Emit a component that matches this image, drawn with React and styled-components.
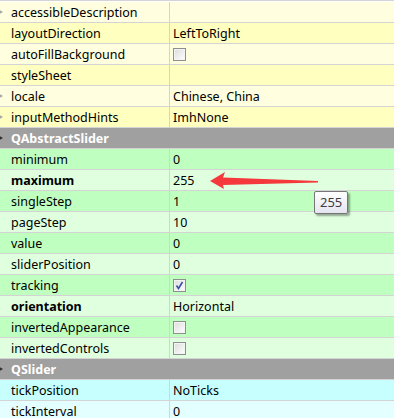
import React from 'react';
import styled, { createGlobalStyle } from 'styled-components';

const GlobalStyle = createGlobalStyle`
  html, body {
    margin: 0;
    padding: 0;
    background: #ffffff;
  }
  body {
    font-family: "Noto Sans", "DejaVu Sans", sans-serif;
    font-size: 12.5px;
    color: #000;
  }
`;

const palette = {
  yellow: ['#ffffdf', '#ffffbf'],
  green: ['#dfffdf', '#bfffbf'],
  cyan: ['#e3ffff', '#c7ffff'],
};

const Editor = styled.div`
  position: relative;
  width: 394px;
  height: 418px;
  overflow: hidden;
  border-top: 1px solid #d4d4d4;
  padding-top: 1px;
  box-sizing: border-box;
`;

const Row = styled.div`
  display: grid;
  grid-template-columns: 170px 1fr;
  height: 20px;
  border-bottom: 1px solid #d4d4d4;
  background: ${(p) => p.$bg};
`;

const NameCell = styled.div`
  display: grid;
  grid-template-columns: 11px 1fr;
  align-items: center;
  border-right: 1px solid #d4d4d4;
  font-weight: ${(p) => (p.$bold ? 700 : 400)};
  white-space: nowrap;
  overflow: hidden;
`;

const ValueCell = styled.div`
  display: flex;
  align-items: center;
  padding-left: 3px;
  white-space: nowrap;
`;

const Expander = styled.span`
  width: 0;
  height: 0;
  margin-left: -2px;
  border-top: 3px solid transparent;
  border-bottom: 3px solid transparent;
  border-left: 5px solid ${(p) => p.$color || '#a8a8a8'};
  visibility: ${(p) => (p.$show ? 'visible' : 'hidden')};
`;

const HeaderRow = styled.div`
  display: grid;
  grid-template-columns: 11px 1fr;
  align-items: center;
  height: 20px;
  border-bottom: 1px solid #d4d4d4;
  background: #a0a0a0;
  color: #ffffff;
  font-weight: 700;
`;

const Check = styled.span`
  display: inline-flex;
  align-items: center;
  justify-content: center;
  width: 11px;
  height: 11px;
  border: 1px solid #8f8f8f;
  background: linear-gradient(135deg, #dcdcdc 0%, #f4f4f4 70%, #ffffff 100%);
  box-shadow: inset 0 0 0 1px #f4f4f4;
`;

const Tooltip = styled.div`
  position: absolute;
  left: 314px;
  top: 190px;
  padding: 1px 5px 2px;
  border: 1px solid #767676;
  border-radius: 2px;
  background: linear-gradient(#ffffff, #e4e5f0);
  color: #3c3c3c;
  font-size: 13px;
  box-shadow: 2px 2px 2px rgba(0, 0, 0, 0.35);
`;

const ArrowLayer = styled.svg`
  position: absolute;
  left: 205px;
  top: 168px;
`;

const Checkbox = ({ checked }) => (
  <Check>
    {checked && (
      <svg width="11" height="11" viewBox="0 0 11 11">
        <path d="M2.5 5.5 L4.5 8.5 L8.5 2" stroke="#3a4fa6" strokeWidth="1.6" fill="none" />
      </svg>
    )}
  </Check>
);

const groups = [
  {
    header: null,
    color: 'yellow',
    rows: [
      { name: 'accessibleDescription', value: '', expand: true },
      { name: 'layoutDirection', value: 'LeftToRight' },
      { name: 'autoFillBackground', check: false },
      { name: 'styleSheet', value: '' },
      { name: 'locale', value: 'Chinese, China', expand: true },
      { name: 'inputMethodHints', value: 'ImhNone', expand: true },
    ],
  },
  {
    header: 'QAbstractSlider',
    color: 'green',
    rows: [
      { name: 'minimum', value: '0' },
      { name: 'maximum', value: '255', bold: true },
      { name: 'singleStep', value: '1' },
      { name: 'pageStep', value: '10' },
      { name: 'value', value: '0' },
      { name: 'sliderPosition', value: '0' },
      { name: 'tracking', check: true },
      { name: 'orientation', value: 'Horizontal', bold: true },
      { name: 'invertedAppearance', check: false },
      { name: 'invertedControls', check: false },
    ],
  },
  {
    header: 'QSlider',
    color: 'cyan',
    rows: [
      { name: 'tickPosition', value: 'NoTicks' },
      { name: 'tickInterval', value: '0' },
    ],
  },
];

export default function App() {
  return (
    <>
      <GlobalStyle />
      <Editor>
        {groups.map((g, gi) => (
          <React.Fragment key={gi}>
            {g.header && (
              <HeaderRow>
                <Expander $show $color="#303030" />
                {g.header}
              </HeaderRow>
            )}
            {g.rows.map((r, i) => {
              const shade = g.header ? (i + 1) % 2 : i % 2;
              return (
                <Row key={r.name} $bg={palette[g.color][shade]}>
                  <NameCell $bold={r.bold}>
                    <Expander $show={r.expand} />
                    {r.name}
                  </NameCell>
                  <ValueCell>
                    {r.check !== undefined ? <Checkbox checked={r.check} /> : r.value}
                  </ValueCell>
                </Row>
              );
            })}
          </React.Fragment>
        ))}
        <ArrowLayer width="120" height="24" viewBox="0 0 120 24">
          <path d="M5 12 L20 3 L18 8.5 L113 12 L113 13.5 L18 16 L19 20 Z" fill="#f4383b" />
        </ArrowLayer>
        <Tooltip>255</Tooltip>
      </Editor>
    </>
  );
}
